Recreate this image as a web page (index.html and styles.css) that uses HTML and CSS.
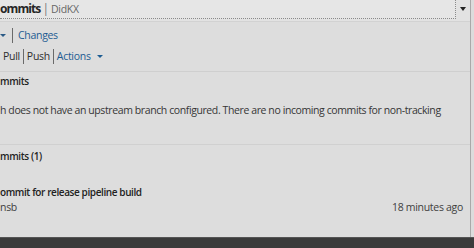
FILE: index.html
```html
<!DOCTYPE html>
<html>
<head>
<meta charset="utf-8">
<link rel="stylesheet" href="styles.css">
</head>
<body>
<div class="window">
  <div class="panel">
    <div class="header">
      <div class="title-box">
        <span class="title">ommits</span>
        <span class="sep">|</span>
        <span class="repo">DidKX</span>
      </div>
      <span class="hdr-arrow"></span>
    </div>
    <div class="nav">
      <span class="caret dark"></span>
      <span class="vbar"></span>
      <span class="link">Changes</span>
    </div>
    <div class="actions">
      <span class="plain">Pull</span>
      <span class="vbar"></span>
      <span class="plain">Push</span>
      <span class="vbar"></span>
      <span class="link">Actions</span>
      <span class="caret blue"></span>
    </div>
    <div class="section incoming">
      <div class="sec-title">mmits</div>
      <div class="message">h does not have an upstream branch configured. There are no incoming commits for non-tracking</div>
    </div>
    <div class="section outgoing">
      <div class="sec-title">mmits (1)</div>
      <div class="commit">
        <div class="commit-title">ommit for release pipeline build</div>
        <div class="commit-meta">
          <span class="author">nsb</span>
          <span class="time">18 minutes ago</span>
        </div>
      </div>
    </div>
  </div>
  <div class="statusbar"></div>
</div>
</body>
</html>
```

FILE: styles.css
```css
* { box-sizing: border-box; }
html, body {
  margin: 0;
  padding: 0;
}
body {
  width: 474px;
  height: 248px;
  overflow: hidden;
  background: #dcdcdc;
  font-family: "Open Sans", "Noto Sans", sans-serif;
  color: #333;
}
.window {
  height: 248px;
  display: flex;
  flex-direction: column;
}
.panel {
  flex: 1;
  width: 471px;
  border-right: 1px solid #a9a9a9;
  display: flex;
  flex-direction: column;
  background: #dddddd;
}
.header {
  height: 22px;
  display: flex;
  align-items: flex-start;
  background: #e2e2e2;
  border-bottom: 1px solid #d2d2d2;
}
.title-box {
  width: 456px;
  height: 19px;
  display: flex;
  align-items: baseline;
  gap: 2px;
  border-right: 1px dotted #8a8a8a;
  border-bottom: 1px dotted #8a8a8a;
  background: #e6e6e6;
  line-height: 18px;
}
.title {
  font-size: 12px;
  font-weight: 700;
  color: #262626;
  letter-spacing: -0.9px;
}
.sep {
  font-size: 12px;
  color: #777;
}
.repo {
  font-size: 10.5px;
  color: #666;
  letter-spacing: -0.3px;
}
.hdr-arrow {
  margin: 7px 0 0 4px;
  width: 0;
  height: 0;
  border-left: 3px solid transparent;
  border-right: 3px solid transparent;
  border-top: 4px solid #222;
}
.nav {
  height: 22px;
  margin-top: 2px;
  display: flex;
  align-items: center;
  font-size: 10.5px;
  letter-spacing: -0.3px;
}
.nav .vbar {
  margin: 0 5px 0 6px;
}
.actions {
  height: 20px;
  display: flex;
  align-items: center;
  gap: 3px;
  padding-left: 3px;
  font-size: 10.5px;
  letter-spacing: -0.3px;
}
.vbar {
  width: 1px;
  height: 15px;
  background: #6a6a6a;
}
.link {
  color: #1d5c92;
}
.plain {
  color: #2e2e2e;
}
.caret {
  width: 0;
  height: 0;
  border-left: 3px solid transparent;
  border-right: 3px solid transparent;
  border-top: 3px solid #1d5c92;
}
.caret.dark {
  border-top-color: #2a5a86;
}
.caret.blue {
  margin-left: 3px;
}
.section {
  display: flex;
  flex-direction: column;
}
.incoming {
  margin-top: 5px;
  border-top: 1px solid #cfcfcf;
  height: 73px;
  padding-top: 1px;
}
.sec-title {
  font-size: 10px;
  font-weight: 600;
  letter-spacing: -0.4px;
  color: #1f1f1f;
  line-height: 16px;
}
.message {
  margin-top: 14px;
  font-size: 10.5px;
  letter-spacing: -0.4px;
  line-height: 14px;
  color: #363636;
  white-space: nowrap;
}
.outgoing {
  border-top: 1px solid #d0d0d0;
  padding-top: 3px;
}
.commit {
  margin-top: 21px;
}
.commit-title {
  font-size: 10px;
  font-weight: 600;
  letter-spacing: -0.4px;
  color: #222;
  line-height: 15px;
}
.commit-meta {
  display: flex;
  justify-content: space-between;
  font-size: 10.5px;
  letter-spacing: -0.3px;
  line-height: 15px;
  color: #404040;
  padding-right: 7px;
}
.statusbar {
  height: 11px;
  background: #3b3b3b;
  border-top: 1px solid #555;
}
```
